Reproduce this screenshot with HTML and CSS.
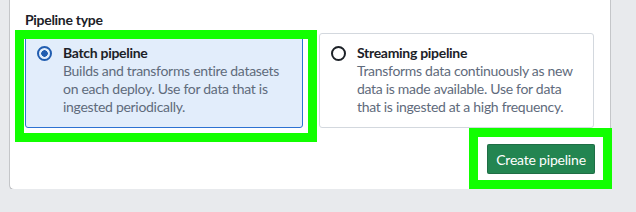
FILE: index.html
```html
<!DOCTYPE html>
<html lang="en">
<head>
    <meta charset="UTF-8">
    <title>Create pipeline</title>
    <link rel="stylesheet" href="styles.css">
</head>
<body>
    <div class="painel">
        <h4 class="rotulo">Pipeline type</h4>
        <div class="opcoes">
            <label class="opcao ativa">
                <span class="radio"></span>
                <span class="textos">
                    <b>Batch pipeline</b>
                    <span class="desc">Builds and transforms entire datasets on each deploy. Use for data that is ingested periodically.</span>
                </span>
                <span class="marca marcaCard"></span>
            </label>
            <label class="opcao">
                <span class="radio"></span>
                <span class="textos">
                    <b>Streaming pipeline</b>
                    <span class="desc">Transforms data continuously as new data is made available. Use for data that is ingested at a high frequency.</span>
                </span>
            </label>
        </div>
        <div class="rodape">
            <button class="botao">Create pipeline<span class="marca marcaBotao"></span></button>
        </div>
    </div>
</body>
</html>
```

FILE: styles.css
```css
*{
    margin: 0;
    padding: 0;
    box-sizing: border-box;
}
body{
    background-color: #e8eaed;
    font: normal 14px 'Lato', sans-serif;
    letter-spacing: -0.3px;
    color: #1c2127;
    overflow: hidden;
}
.painel{
    width: 600px;
    margin: -4px 0 0 10px;
    padding: 15px 16px 15px 15px;
    background-color: white;
    border-radius: 0 0 4px 4px;
    box-shadow: 0 0 0 1px rgba(17, 20, 24, 0.15), 0 1px 1px rgba(17, 20, 24, 0.2);
}
.rotulo{
    font-size: 14px;
    font-weight: 700;
    line-height: 18px;
    margin-bottom: 4px;
}
.opcoes{
    display: flex;
    gap: 16px;
}
.opcao{
    position: relative;
    flex: 1;
    display: flex;
    gap: 11px;
    padding: 10px 8px 11px 11px;
    border: 1px solid #d3d8de;
    border-radius: 3px;
    line-height: 18px;
}
.opcao.ativa{
    flex: 0 0 278px;
    background-color: #e2edfb;
    border-color: #2d72d2;
}
.radio{
    flex: none;
    width: 15px;
    height: 15px;
    margin-top: 2px;
    border: 2px solid #1c2127;
    border-radius: 50%;
}
.ativa .radio{
    border-color: #215db0;
    background: radial-gradient(circle, #215db0 0 3px, transparent 3.5px);
}
.textos b{
    display: block;
    font-weight: 700;
}
.desc{
    display: block;
    color: #5f6b7c;
}
.rodape{
    display: flex;
    justify-content: flex-end;
    margin-top: 16px;
}
.botao{
    position: relative;
    width: 108px;
    height: 30px;
    margin-right: -1px;
    font: normal 14px 'Lato', sans-serif;
    letter-spacing: -0.2px;
    color: white;
    background-color: #238551;
    border: none;
    border-radius: 2px;
    box-shadow: inset 0 0 0 1px rgba(17, 20, 24, 0.2);
}
/* moldura verde do print */
.marca{
    position: absolute;
    border: 9px solid #11ff00;
}
.marcaCard{
    top: -4px;
    left: -11px;
    right: -15px;
    bottom: -15px;
}
.marcaBotao{
    top: -16px;
    left: -18px;
    right: -17px;
    bottom: -15px;
}
```
